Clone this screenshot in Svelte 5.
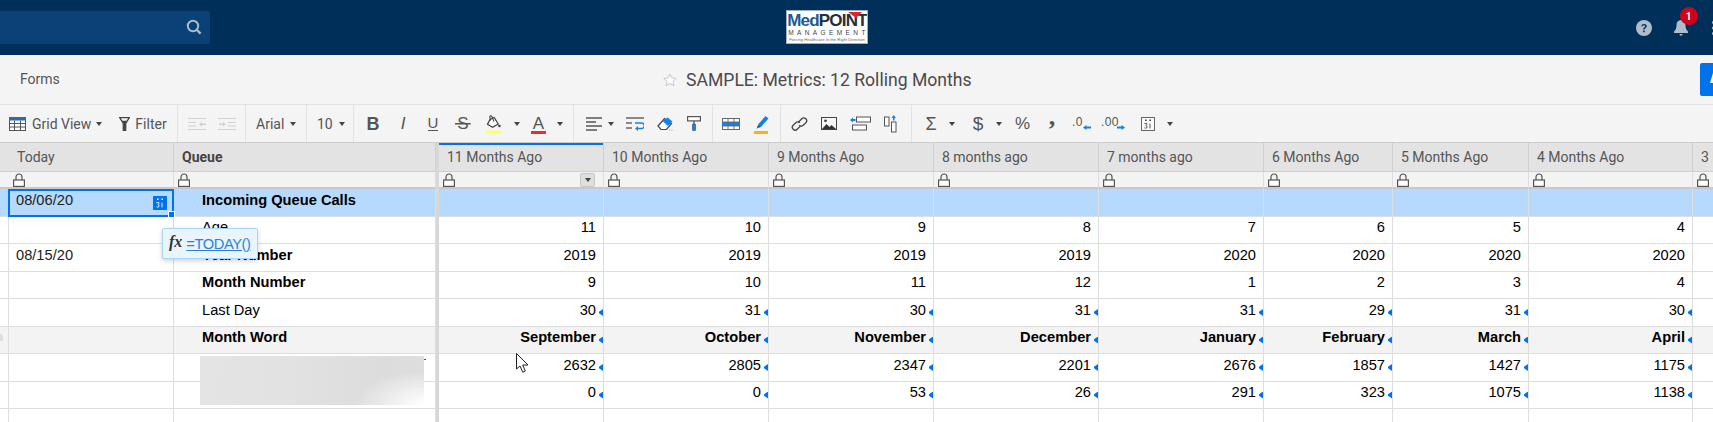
<script>
const columns = ['11 Months Ago', '10 Months Ago', '9 Months Ago', '8 months ago', '7 months ago', '6 Months Ago', '5 Months Ago', '4 Months Ago', '3 Months Ago'];

const rows = [
	{ date: '08/06/20', label: 'Incoming Queue Calls', bold: true, selected: true, values: [] },
	{ date: '', label: 'Age', values: [11, 10, 9, 8, 7, 6, 5, 4, 3] },
	{ date: '08/15/20', label: 'Year Number', bold: true, values: [2019, 2019, 2019, 2019, 2020, 2020, 2020, 2020, 2020] },
	{ date: '', label: 'Month Number', bold: true, values: [9, 10, 11, 12, 1, 2, 3, 4, 5] },
	{ date: '', label: 'Last Day', flag: true, values: [30, 31, 30, 31, 31, 29, 31, 30, 31] },
	{ date: '', label: 'Month Word', bold: true, boldValues: true, flag: true, grey: true, values: ['September', 'October', 'November', 'December', 'January', 'February', 'March', 'April', 'May'] },
	{ date: '', label: '', flag: true, values: [2632, 2805, 2347, 2201, 2676, 1857, 1427, 1175, 1201] },
	{ date: '', label: '', flag: true, values: [0, 0, 53, 26, 291, 323, 1075, 1138, 1177] },
	{ date: '', label: '', values: [] }
];
</script>

{#snippet lock()}
	<svg class="lock" viewBox="0 0 12 14" width="12" height="14"><path d="M3 7V4a3 3 0 0 1 6 0v3" fill="none" stroke="#555" stroke-width="1.2"/><rect x=".6" y="7" width="10.8" height="6.4" fill="#fff" stroke="#555" stroke-width="1.2"/></svg>
{/snippet}

{#snippet caret()}
	<svg class="caret" viewBox="0 0 6 4" width="6" height="4"><path d="M0 0h6L3 4z" fill="#444"/></svg>
{/snippet}

{#snippet calendar(bg, fg)}
	<svg viewBox="0 0 14 14" width="14" height="14"><rect x=".5" y=".5" width="13" height="13" fill={bg} stroke={bg === '#0073ec' ? bg : '#666'}/><path d="M4 2.5h1.6v1.6H4zM8.4 2.5H10v1.6H8.4z" fill={fg}/><path d="M3.4 6.6h2.5v.9l-1 1.2c.8 0 1.2.5 1.2 1.2 0 .8-.6 1.3-1.4 1.3-.5 0-.9-.1-1.2-.4M9 6.6v4.8" fill="none" stroke={fg} stroke-width=".9"/></svg>
{/snippet}

<div class="page">
	<header class="topbar">
		<div class="search">
			<svg viewBox="0 0 16 16" width="16" height="16"><circle cx="7" cy="7" r="5.2" fill="none" stroke="#a9bccd" stroke-width="2"/><path d="M11 11l3.6 3.6" stroke="#a9bccd" stroke-width="2.4"/></svg>
		</div>
		<div class="logo">
			<div class="logo-name"><span class="med">Med</span><span class="point">POINT</span><svg class="logo-tri" viewBox="0 0 14 6" width="14" height="6"><path d="M0 0h14L8 6z" fill="#e0252b"/></svg></div>
			<div class="logo-sub">MANAGEMENT</div>
			<div class="logo-tag">Forcing Healthcare In the Right Direction</div>
		</div>
		<div class="top-icons">
			<svg viewBox="0 0 16 16" width="16" height="16"><circle cx="8" cy="8" r="8" fill="#aebccb"/><path d="M5.4 6.2C5.5 4.7 6.6 4 8 4c1.500 0 2.700.8 2.700 2.200 0 1.900-2.100 1.800-2.100 3.400H7.200c0-2.300 1.900-2.200 1.900-3.400 0-.6-.5-1-1.100-1-.7 0-1.100.4-1.200 1z" fill="#00305a"/><rect x="7.100" y="10.500" width="1.600" height="1.700" fill="#00305a"/></svg>
			<div class="bell">
				<svg viewBox="0 0 14 17" width="14" height="17"><path d="M7 1c3 0 4.500 2.200 4.500 5 0 3.500.8 5 2.500 6.500V14H0v-1.500C1.700 11 2.500 9.500 2.500 6 2.500 3.200 4 1 7 1z" fill="#aebccb"/><path d="M5.500 15h3c0 1-.6 1.700-1.500 1.700S5.500 16 5.500 15z" fill="#aebccb"/></svg>
				<span class="badge">1</span>
			</div>
			<svg class="kebab" viewBox="0 0 5 14" width="5" height="14"><circle cx="2.500" cy="1.500" r="1.500" fill="#aebccb"/><circle cx="2.500" cy="7" r="1.500" fill="#aebccb"/><circle cx="2.500" cy="12.500" r="1.500" fill="#aebccb"/></svg>
		</div>
	</header>

	<div class="subbar">
		<span class="forms">Forms</span>
		<svg class="star" viewBox="0 0 14 14" width="14" height="14"><path d="M7 .9l1.900 4 4.300.5-3.200 3 .9 4.300L7 10.600l-3.900 2.100.9-4.300-3.200-3 4.300-.5z" fill="#fafafa" stroke="#c9c9c9"/></svg>
		<span class="title">SAMPLE: Metrics: 12 Rolling Months</span>
		<div class="share"><svg viewBox="0 0 3 14" width="3" height="14"><path d="M3 1L1.500 6 0 11h3z" fill="#fff"/></svg></div>
	</div>

	<div class="toolbar">
		<div class="group g1">
			<svg viewBox="0 0 17 14" width="17" height="14"><rect x=".5" y=".5" width="16" height="13" fill="#fff" stroke="#555"/><rect x="0" y="0" width="17" height="3.500" fill="#2d6ca8"/><path d="M0 6.500h17M0 10h17M5.500 3.500V14M11.500 3.500V14" stroke="#555"/></svg>
			<span class="tb-text view">Grid View</span>
			{@render caret()}
			<svg class="funnel" viewBox="0 0 11 14" width="11" height="14"><path d="M.7.7h9.600L6.700 6.500V13.400H4.300V6.500z" fill="none" stroke="#444" stroke-width="1.300"/><path d="M3 3.800h5L6.500 6.500v6.500H4.500V6.500z" fill="#444"/></svg>
			<span class="tb-text">Filter</span>
		</div>
		<div class="group g2">
			<svg viewBox="0 0 18 12" width="18" height="12"><path d="M0 .5h18M0 4.500h8M0 8h8M0 11.500h18" stroke="#d0d0d0"/><path d="M11 6.200l3-2.400v1.600h4v1.700h-4v1.600z" fill="#d0d0d0"/></svg>
			<svg viewBox="0 0 18 12" width="18" height="12"><path d="M0 .5h18M10 4.500h8M10 8h8M0 11.500h18" stroke="#d0d0d0"/><path d="M8 6.200l-3-2.400v1.600H1v1.700h4v1.600z" fill="#d0d0d0"/></svg>
		</div>
		<div class="group g3"><span class="tb-text">Arial</span>{@render caret()}</div>
		<div class="group g4"><span class="tb-text">10</span>{@render caret()}</div>
		<div class="group g5">
			<span class="slot"><b class="glyph bold">B</b></span>
			<span class="slot"><i class="glyph ital">I</i></span>
			<span class="slot"><span class="glyph under">U</span></span>
			<span class="slot"><span class="glyph strike">S</span></span>
			<span class="slot">
				<svg viewBox="0 0 15 18" width="15" height="18"><path d="M4 4.500l4.200-2 4 6.500-5.600 3.300L1.500 9.200z" fill="#fff" stroke="#444" stroke-width="1.300"/><path d="M4.500 5.500L3.800 1.500c.6-1 1.600-.8 2 0l2.200 5" fill="none" stroke="#444" stroke-width="1.100"/><circle cx="13.400" cy="11" r="1.300" fill="#444"/><rect x="0" y="15.500" width="15" height="2.500" fill="#ffff66"/></svg>
			</span>
			<span class="slot small">{@render caret()}</span>
			<span class="slot mid"><span class="glyph color-a">A</span></span>
			<span class="slot small">{@render caret()}</span>
		</div>
		<div class="group g6">
			<svg viewBox="0 0 16 14" width="16" height="14"><path d="M0 1h16M0 5h10M0 9h16M0 13h11" stroke="#555" stroke-width="1.300"/></svg>
			{@render caret()}
			<svg class="wrap" viewBox="0 0 18 14" width="18" height="14"><path d="M0 1h18M0 6h6M0 11h6" stroke="#666" stroke-width="1.300"/><path d="M9 6h6.500a2.500 2.500 0 0 1 0 5.500H11" fill="none" stroke="#1581e6" stroke-width="1.300"/><path d="M12 9v5l-3-2.500z" fill="#1581e6"/></svg>
			<svg class="eraser" viewBox="0 0 17 14" width="17" height="14"><path d="M1 9l6.500-7.500 7 5-5 6H4z" fill="#fff" stroke="#444" stroke-width="1.200"/><path d="M5.500 4l5-3.500 5 4-4.500 4.500z" fill="#1581e6"/><path d="M12 13h1.200M14.300 13h1.200" stroke="#aaa"/></svg>
			<svg class="roller" viewBox="0 0 14 15" width="14" height="15"><rect x=".6" y=".6" width="12.800" height="4.300" fill="#fff" stroke="#555" stroke-width="1.200"/><path d="M7 5v3.300" stroke="#555" stroke-width="1.300"/><rect x="5.500" y="8" width="3" height="6.500" rx=".5" fill="#1581e6" stroke="#444" stroke-width=".6"/></svg>
		</div>
		<div class="group g7">
			<svg viewBox="0 0 18 12" width="18" height="12"><rect x=".5" y=".5" width="17" height="11" fill="#fff" stroke="#666"/><rect x="0" y="4" width="18" height="4" fill="#1581e6"/><path d="M0 4h18M0 8h18M6 0v12M12 0v12" stroke="#666" stroke-width=".9"/></svg>
			<svg class="marker" viewBox="0 0 14 16" width="14" height="16"><path d="M3 10.500l7.500-8.500 3 2.500-7.500 8.500H3z" fill="#1581e6"/><path d="M3 11l2.500 2.200-2.500.5-1.500 1.300z" fill="#444"/></svg>
			<span class="marker-bar"></span>
		</div>
		<div class="group g8">
			<svg viewBox="0 0 17 16" width="17" height="16"><path d="M7 6.500l3.800-3.800a2.800 2.800 0 0 1 4 4l-2.600 2.600a2.800 2.800 0 0 1-4 0M10 9.500l-3.800 3.800a2.800 2.800 0 0 1-4-4l2.600-2.600a2.800 2.800 0 0 1 4 0" fill="none" stroke="#444" stroke-width="1.300"/></svg>
			<svg viewBox="0 0 16 13" width="16" height="13"><rect x=".5" y=".5" width="15" height="12" fill="#f7f7f7" stroke="#444"/><path d="M1 12l4.500-5 3 3 2-2 4.500 4z" fill="#333"/><circle cx="4.500" cy="3.800" r="1.400" fill="#444"/></svg>
			<svg viewBox="0 0 21 15" width="21" height="15"><rect x="6.500" y="1" width="14" height="5" fill="#fff" stroke="#555"/><rect x="2.500" y="9" width="14" height="5" fill="#fff" stroke="#555"/><path d="M0 4l3-2.500V3h2.500v2H3v1.500z" fill="#1581e6"/></svg>
			<svg viewBox="0 0 13 18" width="13" height="18"><rect x=".5" y="2" width="4.500" height="9" fill="#fff" stroke="#555"/><rect x="7.500" y="7" width="4.500" height="10" fill="#fff" stroke="#555"/><path d="M9.700 0l2.300 3h-1.500v2.500H9V3H7.500z" fill="#1581e6"/></svg>
		</div>
		<div class="group g9">
			<span class="slot s-sum"><span class="glyph sum">Σ</span></span>
			<span class="slot small">{@render caret()}</span>
			<span class="slot s-dollar"><span class="glyph dollar">$</span></span>
			<span class="slot small">{@render caret()}</span>
			<span class="slot s-pct"><span class="glyph pct">%</span></span>
			<span class="slot s-comma"><span class="glyph comma">,</span></span>
			<span class="slot s-dec"><span class="glyph dec">.0</span><svg class="arrow" viewBox="0 0 8 5" width="8" height="5"><path d="M0 2.500L3.500 0v1.500H8v2H3.500V5z" fill="#1581e6"/></svg></span>
			<span class="slot s-dec2"><span class="glyph dec">.00</span><svg class="arrow" viewBox="0 0 8 5" width="8" height="5"><path d="M8 2.500L4.500 0v1.500H0v2h4.500V5z" fill="#1581e6"/></svg></span>
			<span class="slot s-cal">{@render calendar('#fafafa', '#444')}</span>
			<span class="slot small">{@render caret()}</span>
		</div>
	</div>

	<div class="grid">
		<div class="row head">
			<div class="cell num"></div>
			<div class="cell">Today</div>
			<div class="cell queue">Queue</div>
			<div class="divider"></div>
			{#each columns as col, i}
				<div class="cell" class:active={i === 0}>{col}</div>
			{/each}
		</div>
		<div class="row locks">
			<div class="cell num"></div>
			<div class="cell">{@render lock()}</div>
			<div class="cell">{@render lock()}</div>
			<div class="divider"></div>
			{#each columns as col, i}
				<div class="cell">
					{@render lock()}
					{#if i === 0}
						<span class="menu-btn">{@render caret()}</span>
					{/if}
				</div>
			{/each}
		</div>
		{#each rows as row}
			<div class="row body" class:selected={row.selected} class:grey={row.grey}>
				<div class="cell num">
					{#if row.grey}
						<svg viewBox="0 0 4 10" width="4" height="10"><path d="M0 2c2 0 3 1.500 3 4v3H0z" fill="#ddd"/></svg>
					{/if}
				</div>
				<div class="cell date">{row.date}</div>
				<div class="cell label" class:strong={row.bold}>{row.label}</div>
				<div class="divider"></div>
				{#each columns as col, i}
					<div class="cell value" class:strong={row.boldValues} class:flag={row.flag}>{row.values[i] ?? ''}</div>
				{/each}
			</div>
		{/each}

		<div class="active-cell">
			<span class="active-cal">{@render calendar('#0073ec', '#fff')}</span>
			<span class="handle"></span>
		</div>
		<div class="redacted"></div>
		<span class="tick"></span>
		<div class="tip">
			<span class="fx">fx</span>
			<span class="formula">=TODAY()</span>
		</div>
		<svg class="pointer" viewBox="0 0 13 20" width="13" height="20"><path d="M.5.500V16l3.500-3 2.700 6.200 2.600-1.200L6.700 12H12z" fill="#fff" stroke="#222"/></svg>
	</div>
</div>

<style>
	:global(body) {
		margin: 0;
		background: #fff;
	}

	.page {
		width: 1713px;
		height: 422px;
		overflow: hidden;
		font-family: Roboto, sans-serif;
		color: #444;
	}

	.topbar {
		height: 55px;
		background: #00305a;
		display: flex;
		align-items: center;
	}

	.search {
		width: 210px;
		height: 33px;
		margin-top: -1px;
		background: #0a4277;
		border-radius: 0 2px 2px 0;
		display: flex;
		align-items: center;
		justify-content: flex-end;
		padding-right: 8px;
		box-sizing: border-box;
	}

	.logo {
		width: 82px;
		height: 34px;
		margin-left: 576px;
		margin-top: -1px;
		background: #fff;
		border: 1px solid #9fb0bf;
		box-sizing: border-box;
		display: flex;
		flex-direction: column;
		align-items: center;
		font-family: "Liberation Sans", sans-serif;
		overflow: hidden;
	}

	.logo-name {
		position: relative;
		font-size: 17px;
		line-height: 17px;
		font-weight: bold;
		letter-spacing: -0.8px;
		margin-top: 1px;
	}

	.med {
		color: #1b5c94;
	}

	.point {
		color: #25303a;
	}

	.logo-tri {
		position: absolute;
		right: 5px;
		top: 0;
	}

	.logo-sub {
		font-size: 6.5px;
		line-height: 8px;
		letter-spacing: 3.4px;
		color: #444;
		margin-right: -3px;
	}

	.logo-tag {
		font-size: 4.2px;
		line-height: 6px;
		color: #666;
		white-space: nowrap;
	}

	.top-icons {
		margin-left: auto;
		margin-right: -3px;
		display: flex;
		align-items: center;
		gap: 22px;
	}

	.bell {
		position: relative;
		display: flex;
		margin-right: 1.5px;
	}

	.badge {
		position: absolute;
		left: 6px;
		top: -12px;
		width: 18px;
		height: 18px;
		border-radius: 50%;
		background: #d0021b;
		color: #fff;
		font-size: 10px;
		font-weight: bold;
		display: flex;
		align-items: center;
		justify-content: center;
	}

	.subbar {
		height: 49px;
		background: #f4f4f4;
		border-bottom: 1px solid #e2e2e2;
		display: flex;
		align-items: center;
	}

	.forms {
		width: 643px;
		padding-left: 20px;
		font-size: 14px;
		color: #555;
		margin-top: -1px;
	}

	.star {
		margin-right: 9px;
		margin-top: 1px;
	}

	.title {
		font-size: 17.6px;
		color: #4a4a4a;
		margin-top: 1px;
	}

	.share {
		margin-left: auto;
		width: 13px;
		height: 33px;
		margin-top: -1px;
		background: #0073ec;
		border-radius: 2px 0 0 2px;
		display: flex;
		align-items: center;
		justify-content: flex-end;
	}

	.toolbar {
		height: 37px;
		background: #f4f4f4;
		display: flex;
		align-items: stretch;
	}

	.group {
		display: flex;
		align-items: center;
		box-sizing: border-box;
		border-right: 1px solid #e2e2e2;
	}

	.tb-text {
		font-size: 14px;
		color: #555;
	}

	.caret {
		flex: none;
	}

	.g1 {
		width: 178px;
		padding-left: 9px;
	}

	.view {
		margin: 0 5px 0 6px;
	}

	.funnel {
		margin: 0 5px 0 17px;
	}

	.g2 {
		width: 68px;
		padding-left: 10px;
		gap: 12px;
	}

	.g3 {
		width: 61px;
		padding-left: 10px;
		gap: 6px;
	}

	.g4 {
		width: 47px;
		padding-left: 10px;
		gap: 6px;
	}

	.g5 {
		width: 220px;
		padding-left: 4px;
	}

	.slot {
		width: 30px;
		display: flex;
		align-items: center;
		justify-content: center;
		flex: none;
	}

	.slot.small {
		width: 18px;
	}

	.slot.mid {
		width: 25px;
	}

	.glyph {
		color: #555;
		font-family: "Liberation Sans", sans-serif;
		font-size: 16px;
		line-height: 16px;
		font-style: normal;
		font-weight: normal;
	}

	.bold {
		font-weight: bold;
		font-size: 18px;
	}

	.ital {
		font-style: italic;
		font-size: 17px;
	}

	.under {
		border-bottom: 1.5px solid #555;
		line-height: 14px;
		font-size: 15px;
	}

	.strike {
		font-size: 17px;
		padding: 0 2px;
		background: linear-gradient(#555, #555) center / 100% 1.5px no-repeat;
	}

	.color-a {
		border-bottom: 3px solid #e53030;
		line-height: 15px;
		font-size: 17px;
		padding: 0 1.5px;
		margin-top: 2px;
	}

	.g6 {
		width: 139px;
		padding-left: 12px;
	}

	.g6 .caret {
		margin-left: 6px;
	}

	.wrap {
		margin-left: 12px;
	}

	.eraser {
		margin-left: 13px;
	}

	.roller {
		margin-left: 13px;
	}

	.g7 {
		width: 68px;
		padding-left: 9px;
		position: relative;
	}

	.marker {
		margin-left: 15px;
		margin-top: -3px;
	}

	.marker-bar {
		position: absolute;
		left: 41px;
		top: 26px;
		width: 14px;
		height: 3px;
		background: #f9b115;
	}

	.g8 {
		width: 131px;
		padding-left: 10px;
		gap: 13px;
	}

	.g9 {
		flex: 1;
		padding-left: 9px;
		border-right: none;
	}

	.s-sum {
		width: 20px;
		margin-right: 5px;
	}

	.g9 .slot.small {
		width: 12px;
	}

	.s-dollar {
		width: 30px;
		margin-left: 5px;
	}

	.s-pct {
		width: 29px;
		margin-left: 3px;
	}

	.s-comma {
		width: 30px;
	}

	.s-dec {
		width: 28px;
		padding-right: 7px;
		box-sizing: border-box;
		position: relative;
	}

	.s-dec2 {
		width: 36px;
		padding-right: 6px;
		box-sizing: border-box;
		position: relative;
	}

	.s-cal {
		width: 33px;
	}

	.sum {
		font-size: 18px;
	}

	.dollar {
		font-size: 19px;
	}

	.pct {
		font-size: 17px;
	}

	.comma {
		font-family: "Liberation Serif", serif;
		font-size: 26px;
		font-weight: bold;
		transform: translateY(-7px);
	}

	.dec {
		font-size: 12px;
		letter-spacing: 0.4px;
		margin-top: -3px;
	}

	.arrow {
		position: absolute;
		right: 4px;
		bottom: 0;
	}

	.s-dec2 .arrow {
		right: 6px;
	}

	.grid {
		position: relative;
		border-top: 1px solid #ccc;
	}

	.row {
		display: grid;
		grid-template-columns: 9px 165px 262px 3px 165px 165px 165px 165px 165px 129px 136px 164px 165px;
	}

	.cell {
		box-sizing: border-box;
		border-right: 1px solid #dedede;
		border-bottom: 1px solid #dedede;
		display: flex;
		align-items: center;
		min-width: 0;
		white-space: nowrap;
		position: relative;
	}

	.divider {
		background: #d8d8d8;
	}

	.head {
		height: 29px;
		font-size: 14px;
		color: #555;
	}

	.head .cell {
		background: #e3e3e3;
		padding: 0 8px;
		border-bottom-color: #cfcfcf;
		border-right-color: #d0d0d0;
	}

	.head .queue {
		font-weight: bold;
		color: #444;
	}

	.head .active {
		box-shadow: inset 0 2px 0 #0073ec;
	}

	.locks {
		height: 17px;
	}

	.locks .cell {
		background: #f3f3f3;
		padding-left: 4px;
		border-bottom: 2px solid #c8c8c8;
		justify-content: space-between;
		padding-right: 8px;
	}

	.lock {
		flex: none;
	}

	.menu-btn {
		width: 15px;
		height: 14px;
		background: #dedede;
		border: 1px solid #c8c8c8;
		border-radius: 2px;
		box-sizing: border-box;
		display: flex;
		align-items: center;
		justify-content: center;
	}

	.body {
		height: 27.5px;
		font-family: "Liberation Sans", sans-serif;
		font-size: 14.67px;
		color: #000;
	}

	.body .cell {
		padding-bottom: 5px;
	}

	.selected .cell {
		background: #b5dafd;
	}

	.grey .cell {
		background: #f3f3f3;
	}

	.body .date {
		padding-left: 7px;
		color: #222;
	}

	.body .label {
		padding-left: 28px;
	}

	.strong {
		font-weight: bold;
	}

	.value {
		justify-content: flex-end;
		padding-right: 7px;
	}

	.flag::after {
		content: '';
		position: absolute;
		right: 0;
		top: 10px;
		width: 4px;
		height: 7px;
		background: #0073ec;
		clip-path: polygon(100% 0, 100% 100%, 0 60%, 0 40%);
	}

	.active-cell {
		position: absolute;
		left: 8px;
		top: 46px;
		width: 166px;
		height: 28px;
		border: 2px solid #0073ec;
		box-sizing: border-box;
	}

	.active-cal {
		position: absolute;
		right: 5px;
		top: 5px;
		display: flex;
	}

	.handle {
		position: absolute;
		right: -3px;
		bottom: -3px;
		width: 5px;
		height: 5px;
		background: #0073ec;
		border: 1px solid #fff;
	}

	.redacted {
		position: absolute;
		left: 200px;
		top: 213px;
		width: 224px;
		height: 49px;
		background:
			radial-gradient(ellipse 70px 34px at 100% 100%, #fff 0%, rgba(255, 255, 255, 0) 100%),
			linear-gradient(100deg, #e4e4e4 0%, #e2e2e2 40%, #dcdcdc 80%, #dedede 100%);
	}

	.tick {
		position: absolute;
		left: 424px;
		top: 216px;
		width: 2px;
		height: 1px;
		background: #555;
	}

	.tip {
		position: absolute;
		left: 162px;
		top: 85px;
		width: 96px;
		height: 31px;
		box-sizing: border-box;
		background: #e8f5fd;
		border: 1px solid #a5d8f3;
		border-radius: 2px;
		box-shadow: 0 2px 5px rgba(0, 0, 0, 0.18);
		display: flex;
		align-items: center;
		padding-left: 6px;
		gap: 4px;
	}

	.fx {
		font-family: "Liberation Serif", serif;
		font-style: italic;
		font-weight: bold;
		font-size: 16px;
		color: #333;
		margin-top: -4px;
	}

	.formula {
		font-family: "Liberation Sans", sans-serif;
		font-size: 14.67px;
		letter-spacing: -0.4px;
		color: #2c7fe0;
		text-decoration: underline;
	}

	.pointer {
		position: absolute;
		left: 516px;
		top: 210px;
	}
</style>
